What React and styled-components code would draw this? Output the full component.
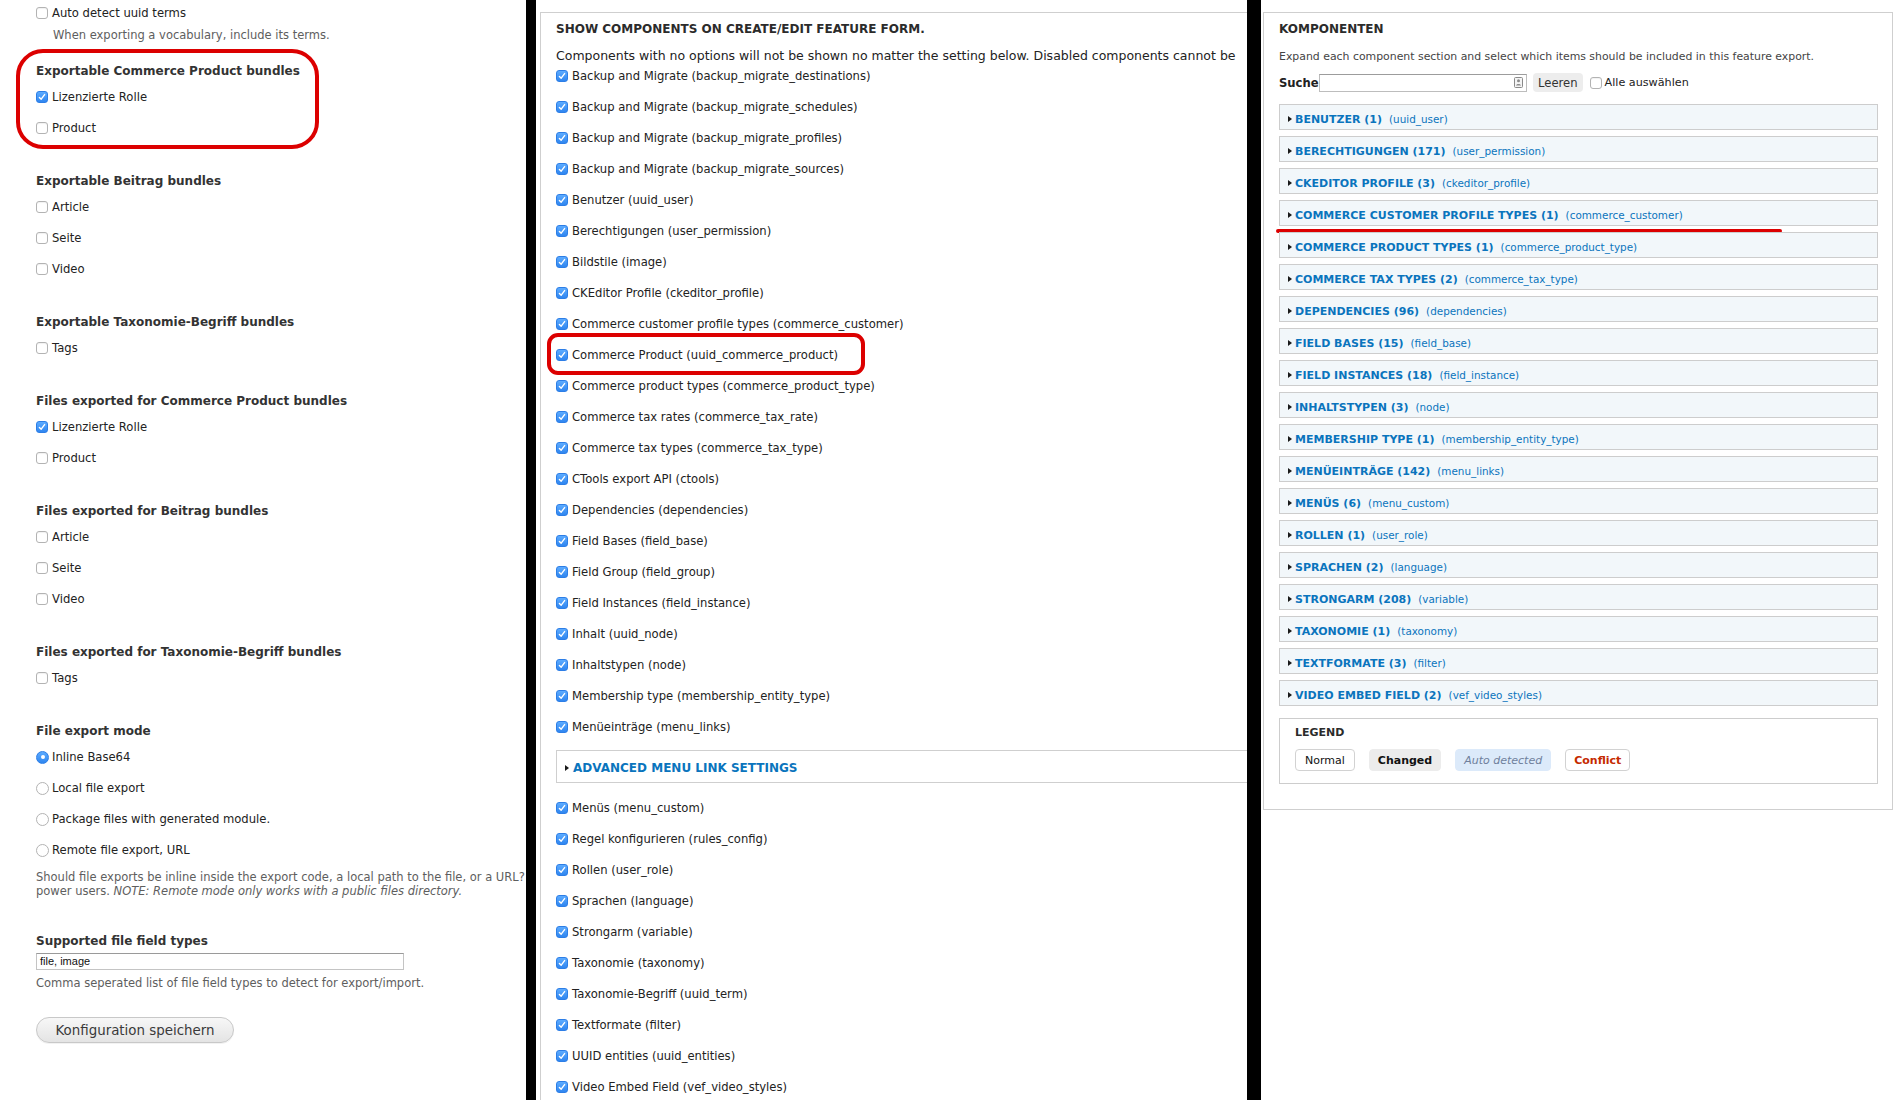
import React from 'react'
import styled, { createGlobalStyle } from 'styled-components'

const GlobalStyle = createGlobalStyle`
  html, body {
    margin: 0;
    padding: 0;
    background: #fff;
  }
  body {
    font-family: "DejaVu Sans", "Liberation Sans", sans-serif;
    color: #333;
  }
`

const Page = styled.div`
  display: flex;
  width: 1900px;
  height: 1100px;
  overflow: hidden;
  background: #fff;
`

const Divider = styled.div`
  flex: 0 0 ${p => p.$w}px;
  background: #000;
`

/* ---------- shared form bits ---------- */

const Box = styled.span`
  flex: 0 0 auto;
  width: 12px;
  height: 12px;
  box-sizing: border-box;
  border-radius: 3px;
  border: 1px solid ${p => (p.$on ? '#2d7ee6' : '#b3b3b3')};
  background: ${p => (p.$on ? 'linear-gradient(#5cabff, #2f86f0)' : '#fff')};
  box-shadow: ${p => (p.$on ? 'none' : 'inset 0 1px 1px rgba(0,0,0,0.06)')};
  display: inline-flex;
  align-items: center;
  justify-content: center;
`

const Radio = styled.span`
  flex: 0 0 auto;
  width: 13px;
  height: 13px;
  box-sizing: border-box;
  border-radius: 50%;
  border: 1px solid ${p => (p.$on ? '#2d7ee6' : '#b3b3b3')};
  background: ${p => (p.$on ? 'linear-gradient(#5cabff, #2f86f0)' : '#fff')};
  display: inline-flex;
  align-items: center;
  justify-content: center;

  &::after {
    content: '';
    display: ${p => (p.$on ? 'block' : 'none')};
    width: 4px;
    height: 4px;
    border-radius: 50%;
    background: #fff;
  }
`

const Check = ({ on }) => (
  <Box $on={on}>
    {on && (
      <svg width="8" height="8" viewBox="0 0 8 8">
        <path d="M1.4 4.4 L3.2 6.2 L6.6 1.6" stroke="#fff" strokeWidth="1.4" fill="none" strokeLinecap="round" strokeLinejoin="round" />
      </svg>
    )}
  </Box>
)

const Item = styled.div`
  display: flex;
  align-items: center;
  gap: 4px;
  height: 18px;
  font-size: 11.6px;
  color: #222;
  white-space: nowrap;
  margin-top: ${p => (p.$first ? 8 : 13)}px;
`

const Annotation = styled.div`
  position: absolute;
  left: ${p => p.$x}px;
  top: ${p => p.$y}px;
  width: ${p => p.$w}px;
  height: ${p => p.$h}px;
  box-sizing: border-box;
  border: 4px solid #dc0000;
  border-radius: ${p => p.$r}px;
  pointer-events: none;
`

/* ---------- left panel ---------- */

const LeftPanel = styled.div`
  position: relative;
  flex: 0 0 526px;
  box-sizing: border-box;
  padding: 4px 0 0 36px;
  overflow: hidden;
`

const Hint = styled.div`
  font-size: 11.5px;
  line-height: 14px;
  color: #5e5e5e;
  white-space: nowrap;
  margin-top: ${p => p.$mt || 0}px;
  padding-left: ${p => p.$indent || 0}px;

  em {
    font-style: italic;
  }
`

const Group = styled.div`
  margin-top: ${p => p.$mt || 0}px;
  margin-bottom: 35px;
`

const GroupTitle = styled.div`
  font-size: 12px;
  font-weight: bold;
  line-height: 18px;
  color: #333;
  white-space: nowrap;
`

const TextField = styled.div`
  margin-top: 3px;
  width: 368px;
  height: 17px;
  box-sizing: border-box;
  border: 1px solid #c4c4c4;
  border-top-color: #9a9a9a;
  font-family: "Liberation Sans", Arial, sans-serif;
  font-size: 11px;
  line-height: 15px;
  padding-left: 3px;
  color: #111;
`

const SaveButton = styled.button`
  margin-top: 27px;
  width: 198px;
  height: 26px;
  border: 1px solid #c8c8c8;
  border-radius: 13px;
  background: linear-gradient(#f7f7f7, #e4e4e4);
  font-family: "DejaVu Sans", sans-serif;
  font-size: 13.4px;
  color: #3a3a3a;
  padding: 0;
  box-shadow: 0 1px 0 rgba(0, 0, 0, 0.05);
`

const leftGroups = [
  { title: 'Exportable Commerce Product bundles', items: [['Lizenzierte Rolle', true], ['Product', false]] },
  { title: 'Exportable Beitrag bundles', items: [['Article', false], ['Seite', false], ['Video', false]] },
  { title: 'Exportable Taxonomie-Begriff bundles', items: [['Tags', false]] },
  { title: 'Files exported for Commerce Product bundles', items: [['Lizenzierte Rolle', true], ['Product', false]] },
  { title: 'Files exported for Beitrag bundles', items: [['Article', false], ['Seite', false], ['Video', false]] },
  { title: 'Files exported for Taxonomie-Begriff bundles', items: [['Tags', false]] },
]

const exportModes = [
  ['Inline Base64', true],
  ['Local file export', false],
  ['Package files with generated module.', false],
  ['Remote file export, URL', false],
]

function LeftSettings() {
  return (
    <LeftPanel>
      <Item style={{ marginTop: 0 }}>
        <Check on={false} />
        Auto detect uuid terms
      </Item>
      <Hint $mt={6} $indent={17}>When exporting a vocabulary, include its terms.</Hint>

      {leftGroups.map((g, gi) => (
        <Group key={gi} $mt={gi === 0 ? 20 : 0}>
          <GroupTitle>{g.title}</GroupTitle>
          {g.items.map(([label, on], i) => (
            <Item key={i} $first={i === 0}>
              <Check on={on} />
              {label}
            </Item>
          ))}
        </Group>
      ))}

      <Group style={{ marginBottom: 0 }}>
        <GroupTitle>File export mode</GroupTitle>
        {exportModes.map(([label, on], i) => (
          <Item key={i} $first={i === 0} style={{ gap: 3 }}>
            <Radio $on={on} />
            {label}
          </Item>
        ))}
      </Group>
      <Hint $mt={11}>
        Should file exports be inline inside the export code, a local path to the file, or a URL?
        <br />
        power users. <em>NOTE: Remote mode only works with a public files directory.</em>
      </Hint>

      <GroupTitle style={{ marginTop: 34 }}>Supported file field types</GroupTitle>
      <TextField>file, image</TextField>
      <Hint $mt={6}>Comma seperated list of file field types to detect for export/import.</Hint>

      <SaveButton>Konfiguration speichern</SaveButton>

      <Annotation $x={16} $y={49} $w={303} $h={100} $r={27} />
    </LeftPanel>
  )
}

/* ---------- middle panel ---------- */

const MiddlePanel = styled.div`
  position: relative;
  flex: 0 0 711px;
  box-sizing: border-box;
  padding: 12px 0 0 4px;
  overflow: hidden;
`

const Fieldset = styled.div`
  box-sizing: border-box;
  width: ${p => p.$w}px;
  border: 1px solid #cfcfcf;
  padding: 7px 14px ${p => p.$pb || 0}px 15px;
  min-height: ${p => p.$minh || 0}px;
`

const FieldsetTitle = styled.div`
  font-size: 12px;
  font-weight: bold;
  line-height: 18px;
  color: #2b2b2b;
  text-transform: uppercase;
  white-space: nowrap;
`

const Intro = styled.div`
  margin-top: 11px;
  font-size: 12.5px;
  line-height: 14px;
  color: #222;
  white-space: nowrap;
`

const Arrow = styled.span`
  flex: 0 0 auto;
  width: 0;
  height: 0;
  border-top: 3.5px solid transparent;
  border-bottom: 3.5px solid transparent;
  border-left: 4px solid #1a1a1a;
`

const Collapsed = styled.div`
  margin-top: 14px;
  height: 33px;
  box-sizing: border-box;
  border: 1px solid #cfcfcf;
  padding: 2px 0 0 8px;
  display: flex;
  align-items: center;
  gap: 4px;
  font-size: 12px;
  font-weight: bold;
  color: #0a74bd;
  white-space: nowrap;
`

const componentsA = [
  'Backup and Migrate (backup_migrate_destinations)',
  'Backup and Migrate (backup_migrate_schedules)',
  'Backup and Migrate (backup_migrate_profiles)',
  'Backup and Migrate (backup_migrate_sources)',
  'Benutzer (uuid_user)',
  'Berechtigungen (user_permission)',
  'Bildstile (image)',
  'CKEditor Profile (ckeditor_profile)',
  'Commerce customer profile types (commerce_customer)',
  'Commerce Product (uuid_commerce_product)',
  'Commerce product types (commerce_product_type)',
  'Commerce tax rates (commerce_tax_rate)',
  'Commerce tax types (commerce_tax_type)',
  'CTools export API (ctools)',
  'Dependencies (dependencies)',
  'Field Bases (field_base)',
  'Field Group (field_group)',
  'Field Instances (field_instance)',
  'Inhalt (uuid_node)',
  'Inhaltstypen (node)',
  'Membership type (membership_entity_type)',
  'Menüeinträge (menu_links)',
]

const componentsB = [
  'Menüs (menu_custom)',
  'Regel konfigurieren (rules_config)',
  'Rollen (user_role)',
  'Sprachen (language)',
  'Strongarm (variable)',
  'Taxonomie (taxonomy)',
  'Taxonomie-Begriff (uuid_term)',
  'Textformate (filter)',
  'UUID entities (uuid_entities)',
  'Video Embed Field (vef_video_styles)',
]

function MiddleSettings() {
  return (
    <MiddlePanel>
      <Fieldset $w={760} $minh={1200}>
        <FieldsetTitle>Show components on create/edit feature form.</FieldsetTitle>
        <Intro>Components with no options will not be shown no matter the setting below. Disabled components cannot be</Intro>
        {componentsA.map((c, i) => (
          <Item key={c} style={{ marginTop: i === 0 ? 4 : 13 }}>
            <Check on />
            {c}
          </Item>
        ))}
        <Collapsed>
          <Arrow />
          ADVANCED MENU LINK SETTINGS
        </Collapsed>
        {componentsB.map((c, i) => (
          <Item key={c} style={{ marginTop: i === 0 ? 16 : 13 }}>
            <Check on />
            {c}
          </Item>
        ))}
      </Fieldset>
      <Annotation $x={11} $y={333} $w={318} $h={42} $r={11} />
    </MiddlePanel>
  )
}

/* ---------- right panel ---------- */

const RightPanel = styled.div`
  flex: 0 0 639px;
  box-sizing: border-box;
  padding: 12px 0 0 2px;
  overflow: hidden;
`

const SmallIntro = styled.div`
  margin-top: 12px;
  font-size: 10.9px;
  line-height: 14px;
  color: #444;
  white-space: nowrap;
`

const SearchRow = styled.div`
  margin-top: 9px;
  height: 19px;
  display: flex;
  align-items: center;
  font-size: 11.6px;
  color: #222;
`

const SearchLabel = styled.span`
  font-weight: bold;
  width: 40px;
`

const SearchInput = styled.div`
  width: 208px;
  height: 18px;
  box-sizing: border-box;
  border: 1px solid #bdbdbd;
  border-top-color: #9c9c9c;
  display: flex;
  align-items: center;
  justify-content: flex-end;
  padding-right: 3px;
`

const ClearButton = styled.span`
  margin-left: 6px;
  height: 19px;
  padding: 0 5px;
  border-radius: 4px;
  background: #ededed;
  display: inline-flex;
  align-items: center;
  font-size: 11.6px;
  color: #333;
`

const SelectAll = styled.span`
  margin-left: 7px;
  display: inline-flex;
  align-items: center;
  gap: 3px;
  font-size: 11.2px;
`

const ComponentList = styled.div`
  margin-top: 12px;
  display: flex;
  flex-direction: column;
  gap: 6px;
`

const ComponentRow = styled.div`
  position: relative;
  height: 26px;
  box-sizing: border-box;
  border: 1px solid #cdcdcd;
  background: #f2f7fa;
  padding: 4px 0 0 8px;
  display: flex;
  align-items: center;
  gap: 3px;
  white-space: nowrap;
  color: #0a74bd;
`

const ComponentName = styled.span`
  font-size: 11px;
  font-weight: bold;
`

const MachineName = styled.span`
  font-size: 10.4px;
  margin-left: 4px;
`

const Underline = styled.div`
  position: absolute;
  left: -4px;
  top: 28px;
  width: 506px;
  height: 4px;
  border-radius: 2px;
  background: #dc0000;
`

const Legend = styled.div`
  margin-top: 12px;
  height: 66px;
  box-sizing: border-box;
  border: 1px solid #cdcdcd;
  padding: 6px 0 0 15px;
`

const LegendTitle = styled.div`
  font-size: 11px;
  font-weight: bold;
  line-height: 16px;
  color: #2b2b2b;
`

const Badges = styled.div`
  margin-top: 8px;
  display: flex;
  gap: 14px;
`

const badgeLook = {
  normal: 'background:#fff;border:1px solid #d2d2d2;color:#111;',
  changed: 'background:#ececec;border:1px solid #ececec;color:#111;font-weight:bold;',
  auto: 'background:#dceafa;border:1px solid #dceafa;color:#6f7f9c;font-style:italic;',
  conflict: 'background:#fff;border:1px solid #d2d2d2;color:#c52a00;font-weight:bold;',
}

const Badge = styled.span`
  height: 22px;
  box-sizing: border-box;
  padding: 0 ${p => p.$pad}px;
  border-radius: 4px;
  display: inline-flex;
  align-items: center;
  font-size: 11px;
  ${p => badgeLook[p.$kind]}
`

const components = [
  ['BENUTZER (1)', 'uuid_user'],
  ['BERECHTIGUNGEN (171)', 'user_permission'],
  ['CKEDITOR PROFILE (3)', 'ckeditor_profile'],
  ['COMMERCE CUSTOMER PROFILE TYPES (1)', 'commerce_customer'],
  ['COMMERCE PRODUCT TYPES (1)', 'commerce_product_type'],
  ['COMMERCE TAX TYPES (2)', 'commerce_tax_type'],
  ['DEPENDENCIES (96)', 'dependencies'],
  ['FIELD BASES (15)', 'field_base'],
  ['FIELD INSTANCES (18)', 'field_instance'],
  ['INHALTSTYPEN (3)', 'node'],
  ['MEMBERSHIP TYPE (1)', 'membership_entity_type'],
  ['MENÜEINTRÄGE (142)', 'menu_links'],
  ['MENÜS (6)', 'menu_custom'],
  ['ROLLEN (1)', 'user_role'],
  ['SPRACHEN (2)', 'language'],
  ['STRONGARM (208)', 'variable'],
  ['TAXONOMIE (1)', 'taxonomy'],
  ['TEXTFORMATE (3)', 'filter'],
  ['VIDEO EMBED FIELD (2)', 'vef_video_styles'],
]

const CardIcon = () => (
  <svg width="9" height="11" viewBox="0 0 9 11">
    <rect x="0.5" y="0.5" width="8" height="10" rx="1" fill="#f4f4f4" stroke="#8a8a8a" />
    <circle cx="4.5" cy="3.8" r="1.5" fill="#8a8a8a" />
    <path d="M2 8.6 C2 6.4 7 6.4 7 8.6 Z" fill="#8a8a8a" />
  </svg>
)

function ComponentsPanel() {
  return (
    <RightPanel>
      <Fieldset $w={630} $pb={25}>
        <FieldsetTitle>Komponenten</FieldsetTitle>
        <SmallIntro>Expand each component section and select which items should be included in this feature export.</SmallIntro>
        <SearchRow>
          <SearchLabel>Suche</SearchLabel>
          <SearchInput>
            <CardIcon />
          </SearchInput>
          <ClearButton>Leeren</ClearButton>
          <SelectAll>
            <Check on={false} />
            Alle auswählen
          </SelectAll>
        </SearchRow>
        <ComponentList>
          {components.map(([name, machine], i) => (
            <ComponentRow key={machine}>
              <Arrow />
              <ComponentName>{name}</ComponentName>
              <MachineName>({machine})</MachineName>
              {i === 3 && <Underline />}
            </ComponentRow>
          ))}
        </ComponentList>
        <Legend>
          <LegendTitle>LEGEND</LegendTitle>
          <Badges>
            <Badge $kind="normal" $pad={9}>Normal</Badge>
            <Badge $kind="changed" $pad={8}>Changed</Badge>
            <Badge $kind="auto" $pad={8}>Auto detected</Badge>
            <Badge $kind="conflict" $pad={8}>Conflict</Badge>
          </Badges>
        </Legend>
      </Fieldset>
    </RightPanel>
  )
}

export default function App() {
  return (
    <>
      <GlobalStyle />
      <Page>
        <LeftSettings />
        <Divider $w={10} />
        <MiddleSettings />
        <Divider $w={14} />
        <ComponentsPanel />
      </Page>
    </>
  )
}
